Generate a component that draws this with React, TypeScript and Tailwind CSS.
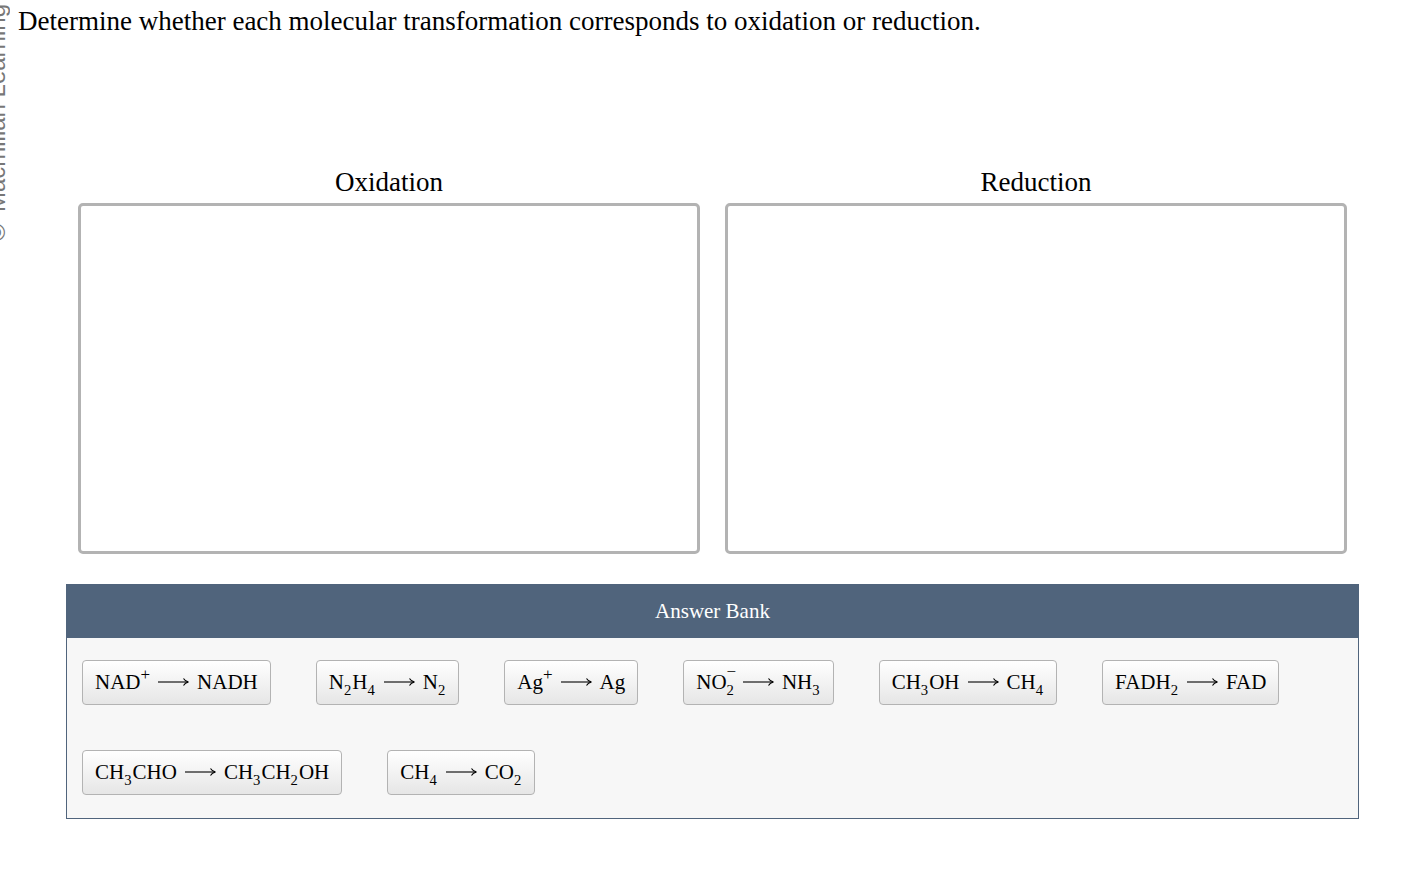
import React from "react";

const serif = "font-['Liberation_Serif','Times_New_Roman',serif]";

function Sub({ children }: { children: React.ReactNode }) {
  return <sub className="bottom-[-6px] mr-[1px] text-[14.7px]">{children}</sub>;
}
function Sup({ children }: { children: React.ReactNode }) {
  return <sup className="text-[17px]">{children}</sup>;
}

// long reaction arrow
function Arrow() {
  return (
    <svg className="mx-[8px] inline-block align-[2px]" width="31" height="10" viewBox="0 0 31 10" fill="none">
      <path d="M0 5H30" stroke="#000" strokeWidth="1.1" />
      <path d="M25.5 1.5C26.5 3.3 28.3 4.5 30.5 5C28.3 5.5 26.5 6.7 25.5 8.5" stroke="#000" strokeWidth="1.1" />
    </svg>
  );
}

const chips: React.ReactNode[][] = [
  [
    <>NAD<Sup>+</Sup><Arrow />NADH</>,
    <>N<Sub>2</Sub>H<Sub>4</Sub><Arrow />N<Sub>2</Sub></>,
    <>Ag<Sup>+</Sup><Arrow />Ag</>,
    <>
      NO
      <span className="relative">
        <Sub>2</Sub>
        <span className="absolute left-0 top-[-7px] text-[17px] leading-none">−</span>
      </span>
      <Arrow />NH<Sub>3</Sub>
    </>,
    <>CH<Sub>3</Sub>OH<Arrow />CH<Sub>4</Sub></>,
    <>FADH<Sub>2</Sub><Arrow />FAD</>,
  ],
  [
    <>CH<Sub>3</Sub>CHO<Arrow />CH<Sub>3</Sub>CH<Sub>2</Sub>OH</>,
    <>CH<Sub>4</Sub><Arrow />CO<Sub>2</Sub></>,
  ],
];

function Chip({ children }: { children: React.ReactNode }) {
  return (
    <div className="flex h-[45px] items-center whitespace-nowrap rounded-[4px] border border-[#b3b3b3] bg-linear-to-b from-white to-[#e6e6e6] px-[12px] text-[21px] text-black">
      <span>{children}</span>
    </div>
  );
}

export default function App() {
  return (
    <div className={`relative min-h-[889px] w-[1416px] overflow-hidden bg-white ${serif}`}>
      <span className="absolute -left-[17px] top-[4px] rotate-180 font-['Liberation_Sans',Arial,sans-serif] text-[24px] leading-[28px] text-[#777] [writing-mode:vertical-rl]">
        © Macmillan Learning
      </span>

      <h1 className="pl-[18px] pt-[6px] text-[27px] leading-[30px] text-black">
        Determine whether each molecular transformation corresponds to oxidation or reduction.
      </h1>

      <div className="ml-[66px] w-[1293px]">
        <div className="mt-[131px] grid grid-cols-2 gap-[25px] px-[12px]">
          {["Oxidation", "Reduction"].map((t) => (
            <div key={t} className="flex flex-col">
              <div className="text-center text-[27px] leading-[30px] text-black">{t}</div>
              <div className="mt-[6px] h-[351px] rounded-[5px] border-[3px] border-[#b3b3b3] bg-white" />
            </div>
          ))}
        </div>

        <div className="mt-[30px] border border-[#50647c] bg-[#f7f7f7]">
          <div className="flex h-[53px] items-center justify-center bg-[#50647c] text-[21px] text-white">
            Answer Bank
          </div>
          <div className="flex flex-col gap-[45px] px-[15px] pb-[23px] pt-[22px]">
            {chips.map((row, i) => (
              <div key={i} className="flex gap-[45px]">
                {row.map((c, j) => (
                  <Chip key={j}>{c}</Chip>
                ))}
              </div>
            ))}
          </div>
        </div>
      </div>
    </div>
  );
}
